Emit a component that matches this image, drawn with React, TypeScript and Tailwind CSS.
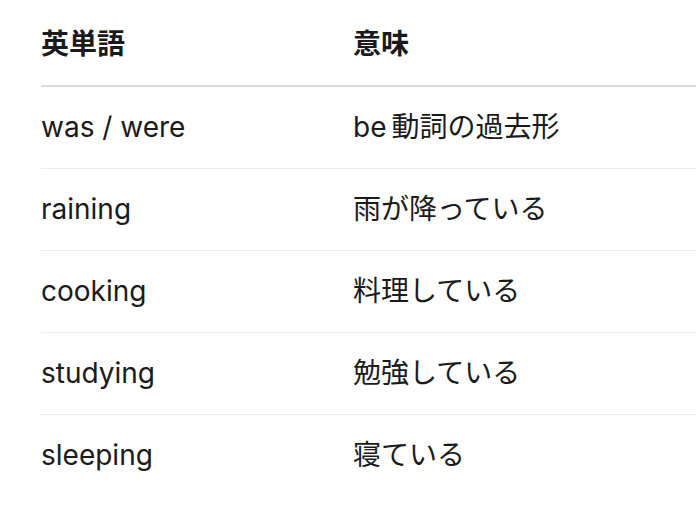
const rows = [
  { word: "was / were", meaning: "be\u2009動詞の過去形" },
  { word: "raining", meaning: "雨が降っている" },
  { word: "cooking", meaning: "料理している" },
  { word: "studying", meaning: "勉強している" },
  { word: "sleeping", meaning: "寝ている" },
];

export default function App() {
  return (
    <div
      className="h-[523px] w-[696px] overflow-hidden bg-white pl-[41px] pt-[4px] text-[28px] text-[#1a1a1a]"
      style={{ fontFamily: 'Inter, "Noto Sans CJK JP", sans-serif' }}
    >
      <div className="w-[720px]">
        <div className="grid h-[83px] grid-cols-[312px_1fr] items-center border-b-2 border-[#dddddd] pb-[2px] font-semibold">
          <div>英単語</div>
          <div>意味</div>
        </div>
        {rows.map((row, i) => (
          <div
            key={row.word}
            className={
              i < rows.length - 1
                ? "grid h-[82px] grid-cols-[312px_1fr] items-center border-b border-[#ebebeb] pb-[2px]"
                : "grid h-[82px] grid-cols-[312px_1fr] items-center pb-[2px]"
            }
          >
            <div>{row.word}</div>
            <div>{row.meaning}</div>
          </div>
        ))}
      </div>
    </div>
  );
}
